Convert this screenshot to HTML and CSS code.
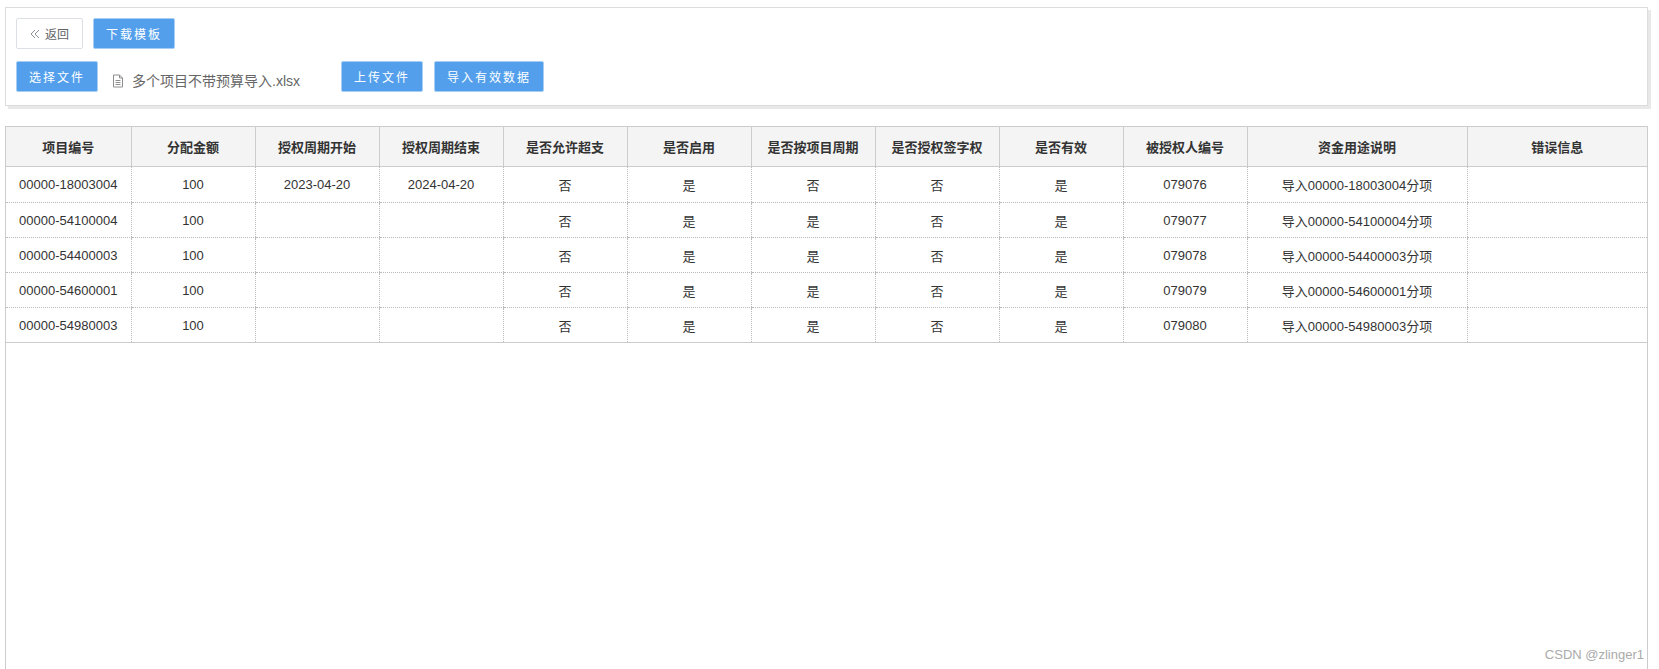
FILE: index.html
```html
<!DOCTYPE html>
<html lang="zh-CN">
<head>
<meta charset="utf-8">
<title>导入</title>
<link rel="stylesheet" href="styles.css">
</head>
<body>
<section class="panel">
  <div class="row row-top">
    <button class="btn btn-plain"><svg class="ico-back" viewBox="0 0 10 10" width="10" height="10"><path d="M5 1 1 5l4 4M9 1 5 5l4 4" fill="none" stroke="#8a8f99" stroke-width="1"/></svg>返回</button>
    <button class="btn btn-blue">下载模板</button>
  </div>
  <div class="row row-file">
    <button class="btn btn-blue">选择文件</button>
    <span class="file"><svg class="ico-file" viewBox="0 0 12 14" width="12" height="14"><path d="M1.5 1h6l3 3v9h-9zM7.5 1v3h3M3.5 6.5h5M3.5 8.5h5M3.5 10.5h5" fill="none" stroke="#8e8e8e" stroke-width="1"/></svg>多个项目不带预算导入.xlsx</span>
    <button class="btn btn-blue">上传文件</button>
    <button class="btn btn-blue">导入有效数据</button>
  </div>
</section>
<main class="grid-wrap">
  <table class="grid">
    <colgroup>
      <col class="c1"><col class="c"><col class="c"><col class="c"><col class="c"><col class="c"><col class="c"><col class="c"><col class="c"><col class="c"><col class="c11"><col>
    </colgroup>
    <thead>
      <tr><th>项目编号</th><th>分配金额</th><th>授权周期开始</th><th>授权周期结束</th><th>是否允许超支</th><th>是否启用</th><th>是否按项目周期</th><th>是否授权签字权</th><th>是否有效</th><th>被授权人编号</th><th>资金用途说明</th><th>错误信息</th></tr>
    </thead>
    <tbody>
      <tr><td>00000-18003004</td><td>100</td><td>2023-04-20</td><td>2024-04-20</td><td>否</td><td>是</td><td>否</td><td>否</td><td>是</td><td>079076</td><td>导入00000-18003004分项</td><td></td></tr>
      <tr><td>00000-54100004</td><td>100</td><td></td><td></td><td>否</td><td>是</td><td>是</td><td>否</td><td>是</td><td>079077</td><td>导入00000-54100004分项</td><td></td></tr>
      <tr><td>00000-54400003</td><td>100</td><td></td><td></td><td>否</td><td>是</td><td>是</td><td>否</td><td>是</td><td>079078</td><td>导入00000-54400003分项</td><td></td></tr>
      <tr><td>00000-54600001</td><td>100</td><td></td><td></td><td>否</td><td>是</td><td>是</td><td>否</td><td>是</td><td>079079</td><td>导入00000-54600001分项</td><td></td></tr>
      <tr><td>00000-54980003</td><td>100</td><td></td><td></td><td>否</td><td>是</td><td>是</td><td>否</td><td>是</td><td>079080</td><td>导入00000-54980003分项</td><td></td></tr>
    </tbody>
  </table>
</main>
<div class="watermark">CSDN @zlinger1</div>
</body>
</html>
```
FILE: styles.css
```css
* { box-sizing: border-box; }
html, body { height: 100%; }
body {
  margin: 0;
  padding: 7px 11px 0 5px;
  overflow: hidden;
  background: #fff;
  font-family: "Liberation Sans", "Noto Sans CJK SC", sans-serif;
  color: #333;
  display: flex;
  flex-direction: column;
}
.panel {
  height: 99px;
  padding: 10px 10px 0;
  border: 1px solid #dcdcdc;
  box-shadow: 3px 3px 0 #e8e8e8;
  background: #fff;
  flex: none;
}
.row { display: flex; align-items: flex-start; }
.row-top { gap: 10px; }
.row-file { margin-top: 12px; gap: 11px; }
.btn {
  height: 31px;
  padding: 0 12px;
  border-radius: 2px;
  font-family: inherit;
  font-size: 12px;
  letter-spacing: 2px;
  white-space: nowrap;
  cursor: pointer;
}
.btn-plain {
  width: 67px;
  padding: 0 11px;
  background: #fff;
  border: 1px solid #dcdfe6;
  color: #606266;
  letter-spacing: 0;
  display: flex;
  align-items: center;
  justify-content: center;
  gap: 5px;
}
.btn-blue {
  background: #539fec;
  border: 1px solid #a6cdf3;
  color: #fff;
}
.file {
  width: 218px;
  margin-left: 3px;
  padding-top: 11px;
  font-size: 14px;
  line-height: 18px;
  color: #666;
  display: flex;
  align-items: center;
  gap: 8px;
}
.ico-file { flex: none; }
.grid-wrap {
  flex: 1;
  margin-top: 20px;
  border: 1px solid #ccc;
  border-bottom: 0;
  min-height: 0;
}
.grid {
  width: 100%;
  table-layout: fixed;
  border-collapse: collapse;
}
.c1 { width: 125px; }
.c { width: 124px; }
.c11 { width: 220px; }
th {
  height: 39px;
  padding: 0;
  background: #f4f4f4;
  border-left: 1px solid #ccc;
  border-bottom: 1px solid #ccc;
  color: #333;
  font-size: 13px;
  font-weight: 700;
  text-align: center;
}
td {
  height: 35px;
  padding: 1px 0 0;
  border-left: 1px dotted #bbb;
  border-bottom: 1px dotted #bbb;
  color: #333;
  font-size: 13px;
  text-align: center;
}
tbody tr:first-child td { height: 36px; }
th:first-child, td:first-child { border-left: 0; }
tbody tr:last-child td { border-bottom: 1px solid #ccc; }
.watermark {
  position: absolute;
  right: 15px;
  bottom: 7px;
  font-size: 13px;
  color: #aaa;
}
```
